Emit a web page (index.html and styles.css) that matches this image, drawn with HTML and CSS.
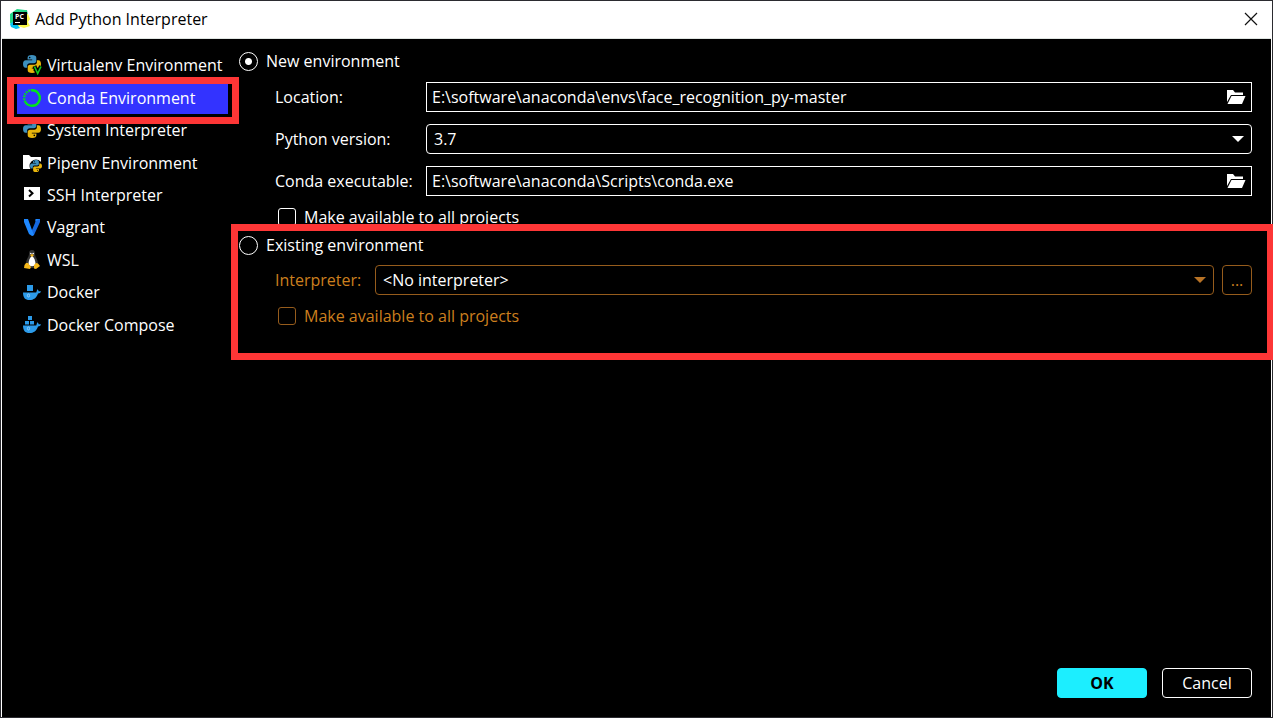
FILE: index.html
```
<!DOCTYPE html>
<html lang="en">
<head>
  <meta charset="UTF-8" />
  <meta name="viewport" content="width=device-width, initial-scale=1.0" />
  <title>Add Python Interpreter</title>
  <link rel="stylesheet" href="styles.css">
</head>
<body>
  <!-- shared icon shapes -->
  <svg class="defs" width="0" height="0" aria-hidden="true">
    <symbol id="python" viewBox="0 0 18 18">
      <path fill="#3d8fbd" d="M8.900 0C5.600 0 4.600 1.200 4.600 2.800V4.600H9.200V5.300H2.800C1 5.300 0 6.800 0 9S1 12.700 2.500 12.700H4.100V10.700C4.100 9.200 5.300 8.200 6.700 8.200H11C12.400 8.200 13.300 7.200 13.300 6V2.800C13.300 1 11.800 0 8.900 0Z"/>
      <path fill="#e9b50b" d="M9.100 18C12.400 18 13.400 16.800 13.400 15.200V13.400H8.800V12.700H15.200C17 12.700 18 11.200 18 9S17 5.300 15.500 5.300H13.900V7.300C13.900 8.800 12.700 9.800 11.300 9.800H7C5.600 9.800 4.700 10.800 4.700 12V15.200C4.700 17 6.200 18 9.100 18Z"/>
      <circle cx="6.700" cy="2.600" r=".8" fill="#000"/>
      <circle cx="11.300" cy="15.400" r=".8" fill="#000"/>
    </symbol>
    <symbol id="whale" viewBox="0 0 18 18">
      <path fill="#2c9bea" d="M0 8.500H13.200C13.800 7.800 13.700 6.500 14.300 5.300C15.300 5.900 15.600 6.700 15.600 7.300C16.500 7.100 17.400 7.200 18 7.600C17.500 8.900 16.500 9.400 15 9.400C13.600 13.600 10.800 16 6.500 16C2 16 0 13.500 0 8.500Z"/>
      <ellipse cx="5.500" cy="11.500" rx="1.100" ry="1.500" fill="none" stroke="#a5d8ff" stroke-width=".8"/>
    </symbol>
    <symbol id="folder" viewBox="0 0 20 16">
      <path fill="#fff" d="M1 1H7L9 3.500H17V6H5L1 13Z"/>
      <path fill="#fff" d="M5.500 7H19.500L16 15H1.500Z"/>
    </symbol>
  </svg>

  <div class="window">
    <header class="titlebar">
      <svg class="app-icon" viewBox="0 0 20 20" aria-hidden="true">
        <path fill="#21d789" d="M0 5L7 0L15 1L14 12L6 20L0 14Z"/>
        <path fill="#07c3f2" d="M0 15L4 12L10 19L6 20L1 18Z"/>
        <path fill="#21d789" d="M11 1L17 1L18 6L14 8Z"/>
        <path fill="#fcf84a" d="M15 5L18 5L20 10L18 13L20 17L14 19L8 17Z"/>
        <rect x="3" y="3" width="14" height="13" fill="#000"/>
        <text class="app-text" x="5" y="10">PC</text>
        <rect x="5" y="13" width="5" height="1" fill="#fff"/>
      </svg>
      <h1 class="title">Add Python Interpreter</h1>
      <button class="close" type="button" aria-label="Close">
        <svg width="14" height="14" viewBox="0 0 14 14"><path d="M1 1L13 13M13 1L1 13" stroke="#111" stroke-width="1.200"/></svg>
      </button>
    </header>

    <div class="content">
      <nav class="sidebar">
        <a class="item" href="#">
          <svg class="icon" viewBox="0 0 20 20"><use href="#python" x="1" y="0" width="18" height="18"/><path d="M12.500 11L15.500 19L19 11" fill="none" stroke="#000" stroke-width="4"/><path d="M12.500 11.500L15.700 18.500L19 11.500" fill="none" stroke="#14c91c" stroke-width="1.600"/></svg>
          Virtualenv Environment
        </a>
        <a class="item selected" href="#">
          <svg class="icon" viewBox="0 0 20 20"><path d="M10 2.200A7.800 7.800 0 1 1 3.300 14" fill="none" stroke="#00e51c" stroke-width="2.400"/><path d="M3.300 14A7.800 7.800 0 0 1 10 2.200" fill="none" stroke="#00e51c" stroke-width="2.400" stroke-dasharray="1.500 1"/></svg>
          Conda Environment
          <span class="mark mark-item"></span>
        </a>
        <a class="item" href="#">
          <svg class="icon" viewBox="0 0 20 20"><use href="#python" x="1" y="0" width="18" height="18"/></svg>
          System Interpreter
        </a>
        <a class="item" href="#">
          <svg class="icon" viewBox="0 0 20 20"><path fill="#fff" d="M1 2H7L9 4H19V16H1Z"/><circle cx="14" cy="13" r="6.500" fill="#000"/><use href="#python" x="8" y="7" width="12" height="12"/></svg>
          Pipenv Environment
        </a>
        <a class="item" href="#">
          <svg class="icon" viewBox="0 0 20 20"><path fill="#fff" d="M2 2H18V15H2Z"/><path d="M7 5L10.500 8.300L7 11.600" fill="none" stroke="#000" stroke-width="2"/></svg>
          SSH Interpreter
        </a>
        <a class="item" href="#">
          <svg class="icon" viewBox="0 0 20 20"><path fill="#1568e0" d="M14 2L18 2V5L12 18L10 19V13L13 6Z"/><path fill="#1e88ff" d="M2 2H6L10 13L12 18L10 19L7 17L2 5Z"/><path fill="#1e88ff" d="M13 3L14 2H18L14 4Z"/></svg>
          Vagrant
        </a>
        <a class="item" href="#">
          <svg class="icon" viewBox="0 0 20 20"><path fill="#333" d="M10 0C7.500 0 7 2 7 4C7 7 4 9 4 14L6 18H14L16 14C16 9 13 7 13 4C13 2 12.500 0 10 0Z"/><path fill="#fff" d="M10 6C8 7 6.500 11 6.500 14C7 17 13 17 13.500 14C13.500 11 12 7 10 6Z"/><circle cx="8.800" cy="3.500" r=".8" fill="#fff"/><circle cx="11.200" cy="3.500" r=".8" fill="#fff"/><path fill="#f5b81c" d="M8 5L10 4L12 5L10 7ZM4 13L6 13L9 17L8 19L2 18L2.500 15ZM14 13L16 13.500L18 16L14 19L12 18.500V15Z"/></svg>
          WSL
        </a>
        <a class="item" href="#">
          <svg class="icon" viewBox="0 0 20 20"><use href="#whale" x="1" y="2" width="18" height="18"/><path fill="#2c9bea" d="M5 3H11V9H5Z"/></svg>
          Docker
        </a>
        <a class="item" href="#">
          <svg class="icon" viewBox="0 0 20 20"><use href="#whale" x="1" y="2" width="18" height="18"/><path fill="#2c9bea" d="M6 1H10V5H6ZM3 6H7V9.500H3ZM8 6H12V9.500H8Z"/></svg>
          Docker Compose
        </a>
      </nav>

      <main class="panel">
        <section class="group">
          <label class="radio-row"><input class="radio" type="radio" name="env" checked>New environment</label>
          <div class="form">
            <label for="location">Location:</label>
            <div class="field">
              <input id="location" type="text" value="E:\software\anaconda\envs\face_recognition_py-master">
              <button class="browse" type="button" aria-label="Browse location"><svg width="20" height="16"><use href="#folder"/></svg></button>
            </div>
            <label for="version">Python version:</label>
            <div class="combo">
              <select id="version"><option>3.7</option></select>
            </div>
            <label for="conda">Conda executable:</label>
            <div class="field">
              <input id="conda" type="text" value="E:\software\anaconda\Scripts\conda.exe">
              <button class="browse" type="button" aria-label="Browse conda executable"><svg width="20" height="16"><use href="#folder"/></svg></button>
            </div>
          </div>
          <label class="check-row"><input class="check" type="checkbox">Make available to all projects</label>
        </section>

        <section class="group existing">
          <label class="radio-row"><input class="radio" type="radio" name="env">Existing environment</label>
          <div class="interpreter">
            <label for="interpreter">Interpreter:</label>
            <div class="combo">
              <select id="interpreter" disabled><option>&lt;No interpreter&gt;</option></select>
            </div>
            <button class="more" type="button" disabled>...</button>
          </div>
          <label class="check-row"><input class="check" type="checkbox" disabled>Make available to all projects</label>
          <span class="mark mark-group"></span>
        </section>
      </main>
    </div>

    <footer class="actions">
      <button class="btn primary" type="button">OK</button>
      <button class="btn" type="button">Cancel</button>
    </footer>
  </div>
</body>
</html>
```

FILE: styles.css
```
* {
  box-sizing: border-box;
}
body {
  margin: 0;
  padding: 1px;
  min-height: 100vh;
  display: flex;
  background: #2b2b30;
  color: #fff;
  font-family: "Open Sans", "Noto Sans", sans-serif;
  font-size: 16px;
  line-height: 20px;
  overflow: hidden;
}
input, select, button {
  font: inherit;
  color: inherit;
}
.defs {
  position: absolute;
}
.window {
  flex: 1;
  min-width: 0;
  display: flex;
  flex-direction: column;
  background: #000;
  border: solid #fff;
  border-width: 0 1px;
}
.titlebar {
  display: flex;
  align-items: center;
  gap: 5px;
  height: 38px;
  padding: 0 13px 2px 8px;
  background: #fff;
  color: #000;
  border-bottom: 1px solid #dfe5e2;
}
.app-icon {
  width: 20px;
  height: 20px;
}
.app-text {
  fill: #fff;
  font-size: 7px;
  font-weight: 700;
}
.title {
  flex: 1;
  margin: 0;
  font-size: 16px;
  font-weight: 400;
}
.close {
  display: flex;
  padding: 0;
  border: 0;
  background: none;
}
.content {
  flex: 1;
  display: flex;
}
.sidebar {
  width: 226px;
  height: 292px;
  margin: 10px 11px 0 0;
  padding-left: 15px;
  display: grid;
  grid-auto-rows: 1fr;
}
.item {
  position: relative;
  display: flex;
  align-items: center;
  gap: 5px;
  padding-left: 5px;
  color: #fff;
  text-decoration: none;
  white-space: nowrap;
}
.selected {
  background: #3333ff;
}
.icon {
  width: 20px;
  height: 20px;
}
.panel {
  flex: 1;
  min-width: 0;
  padding: 12px 19px 0 0;
}
.group {
  position: relative;
}
.radio-row {
  display: flex;
  align-items: center;
  gap: 8px;
}
.radio,
.check {
  appearance: none;
  margin: 0;
  border: 1px solid #fff;
}
.radio {
  width: 19px;
  height: 19px;
  border-radius: 50%;
}
.radio:checked {
  background: radial-gradient(circle, #fff 3px, transparent 4px);
}
.check {
  width: 18px;
  height: 18px;
  border-radius: 3px;
}
.form {
  display: grid;
  grid-template-columns: 143px 1fr;
  gap: 12px 8px;
  align-items: center;
  padding: 11px 0 0 36px;
}
.field {
  display: flex;
  align-items: center;
  height: 30px;
  padding: 0 5px;
  border: 1px solid #fff;
}
.field input {
  flex: 1;
  min-width: 0;
  padding: 0;
  border: 0;
  outline: 0;
  background: none;
}
.browse {
  display: flex;
  padding: 0;
  border: 0;
  background: none;
}
.combo {
  position: relative;
  flex: 1;
}
.combo select {
  display: block;
  width: 100%;
  height: 30px;
  padding: 0 7px;
  appearance: none;
  border: 1px solid #fff;
  border-radius: 4px;
  background: #000;
  opacity: 1;
}
.combo::after {
  content: "";
  position: absolute;
  right: 8px;
  top: 12px;
  border: solid transparent;
  border-width: 6px 6px 0;
  border-top-color: #fff;
}
.check-row {
  display: flex;
  align-items: center;
  gap: 8px;
  padding: 11px 0 0 39px;
}
.existing {
  margin-top: 8px;
}
.interpreter {
  display: flex;
  align-items: center;
  gap: 8px;
  padding: 10px 0 0 36px;
}
.interpreter label {
  width: 92px;
}
.interpreter label,
.existing .check-row,
.more {
  color: #cc7f1e;
}
.interpreter select,
.existing .check,
.more {
  border-color: #965c1c;
}
.interpreter .combo::after {
  border-top-color: #b87326;
}
.more {
  width: 30px;
  height: 30px;
  padding: 0;
  border: 1px solid #965c1c;
  border-radius: 4px;
  background: none;
}
/* red highlight frames, drawn over the dialog */
.mark {
  position: absolute;
  border: 7px solid #fd3636;
  pointer-events: none;
  z-index: 1;
}
.mark-item {
  inset: -4px -11px -10px -10px;
}
.mark-group {
  inset: -11px -22px -34px -8px;
}
.actions {
  display: flex;
  justify-content: flex-end;
  gap: 15px;
  padding: 0 19px 19px;
}
.btn {
  width: 90px;
  height: 30px;
  padding: 0;
  border: 1px solid #fff;
  border-radius: 4px;
  background: #000;
}
.primary {
  border-color: #1ceeff;
  background: #1ceeff;
  color: #000;
  font-weight: 700;
}
```
